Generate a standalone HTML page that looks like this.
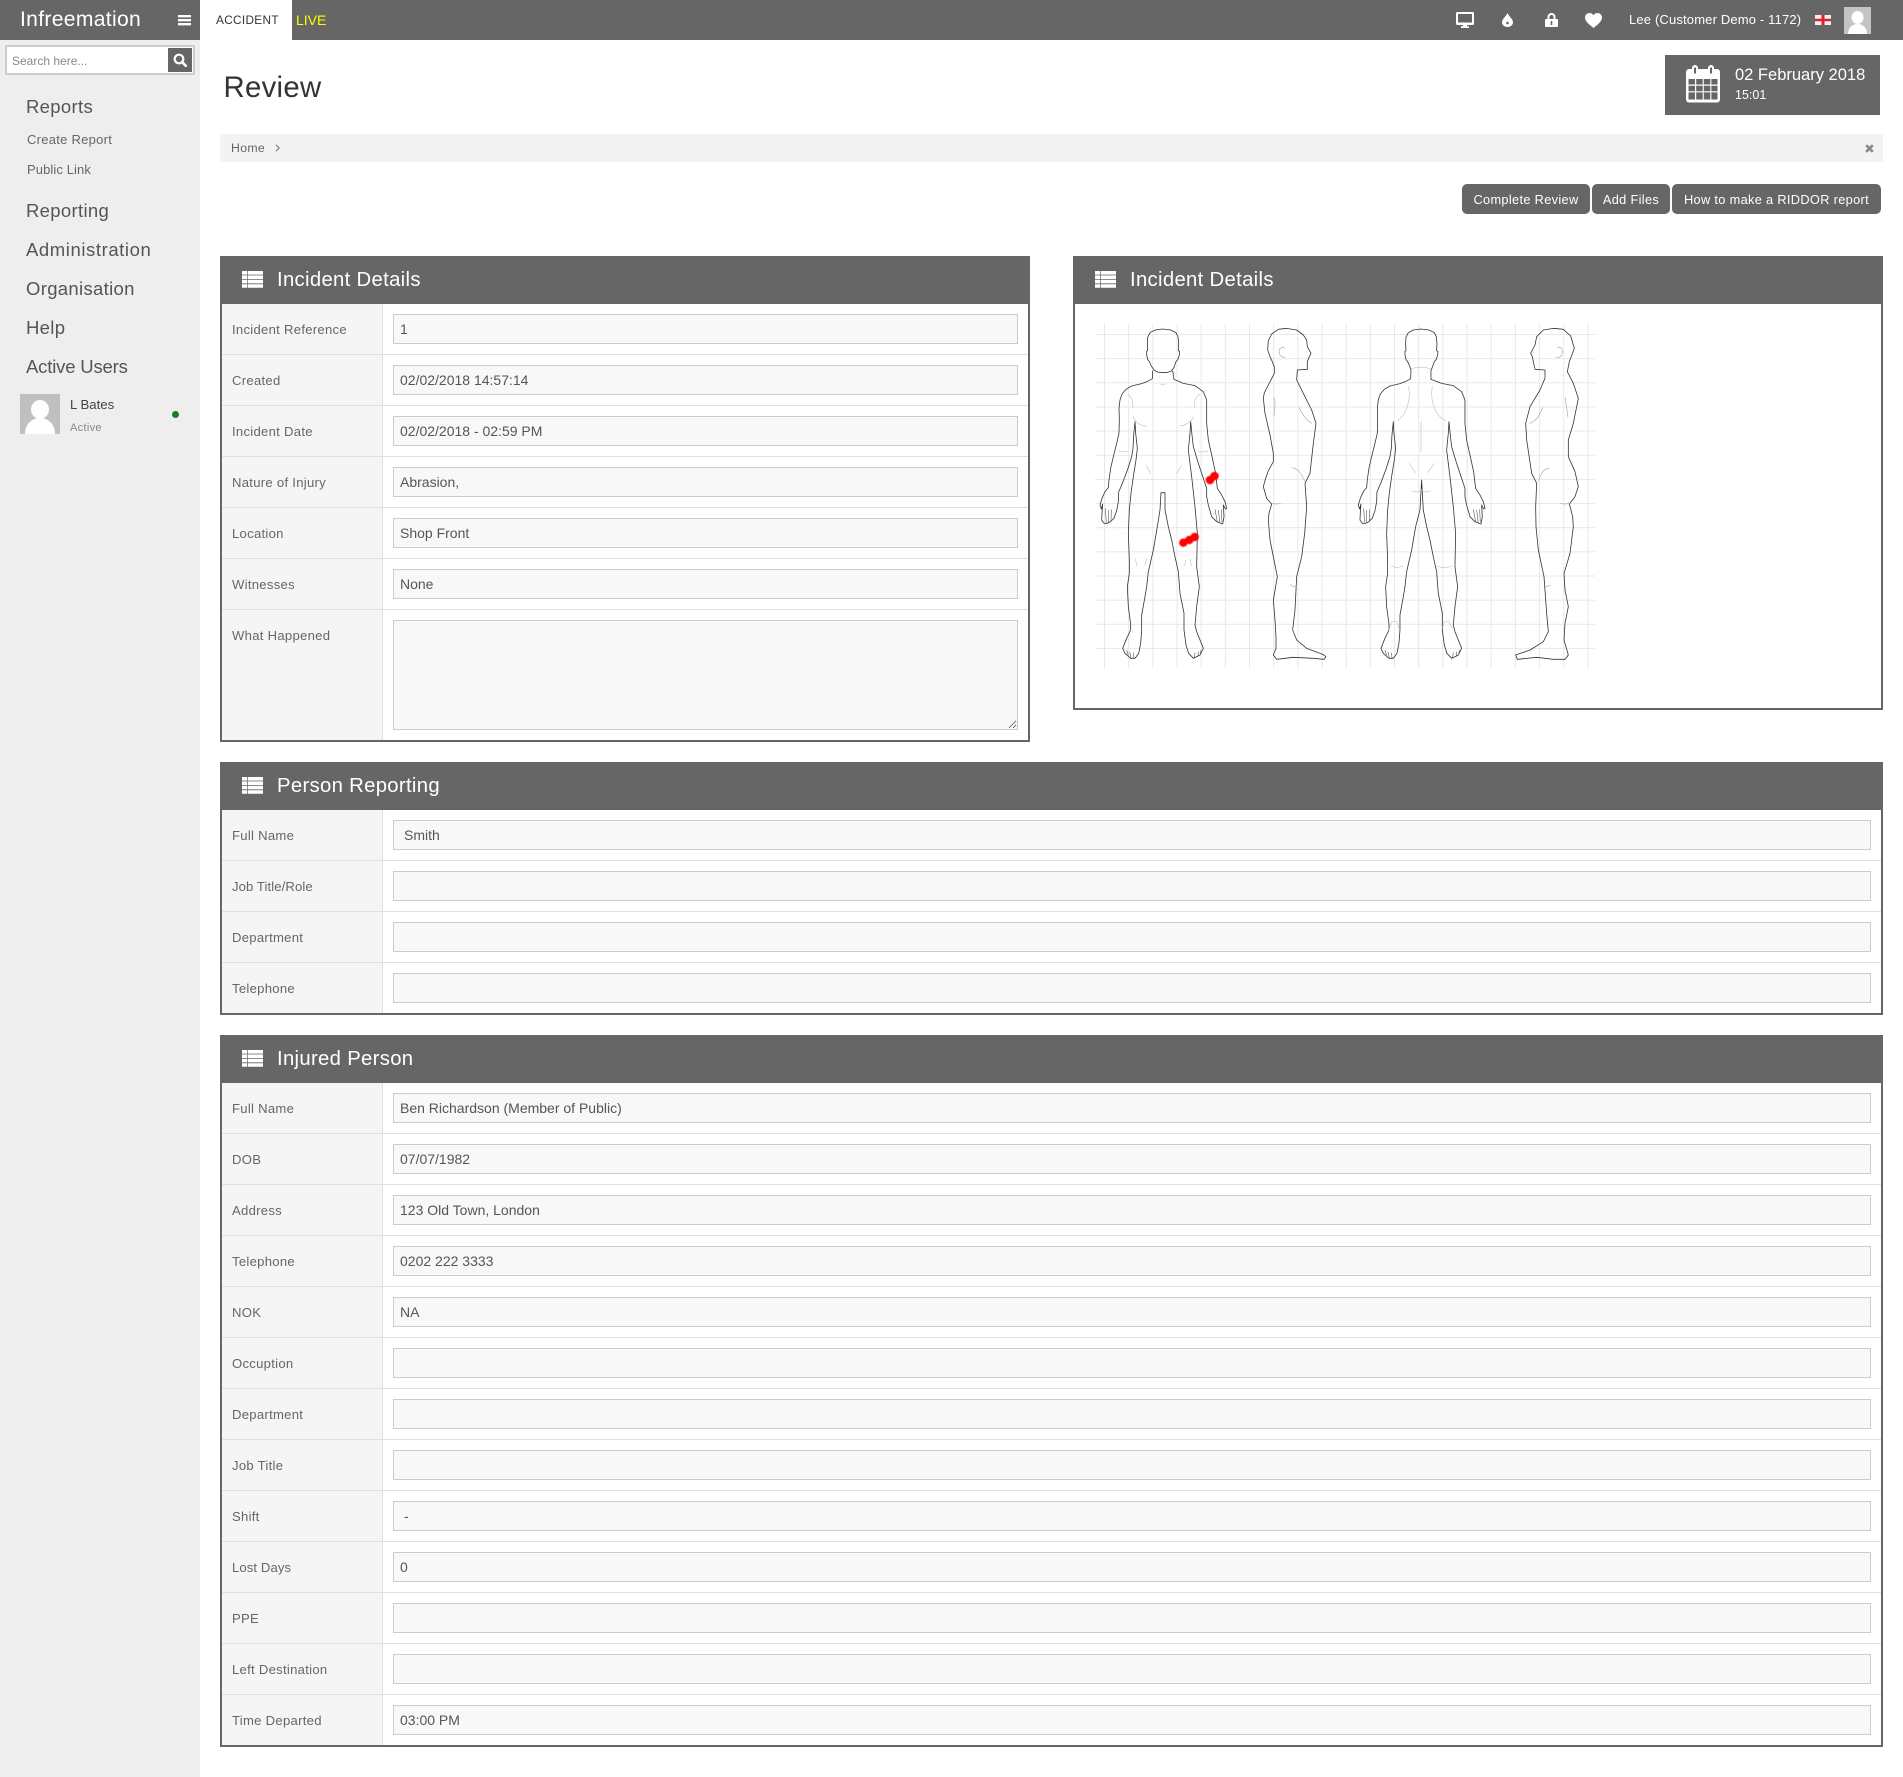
<!DOCTYPE html>
<html lang="en">
<head>
<meta charset="utf-8">
<title>Review</title>
<style>
*{box-sizing:border-box}
html,body{margin:0;padding:0}
body{width:1903px;height:1777px;position:relative;overflow:hidden;background:#fff;font-family:"Liberation Sans",Arial,sans-serif;letter-spacing:.02em;color:#555}
.abs{position:absolute;white-space:nowrap}
#top{position:absolute;left:0;top:0;width:1903px;height:40px;background:#666}
#side{position:absolute;left:0;top:40px;width:200px;height:1737px;background:#eee}
#tab{position:absolute;left:200px;top:0;width:92px;height:40px;background:#fff}
.nav{position:absolute;left:26px;font-size:18.5px;line-height:24px;color:#555;white-space:nowrap}
.sub{position:absolute;left:27px;font-size:13px;line-height:18px;color:#666;white-space:nowrap;letter-spacing:.27px}
.btn{position:absolute;top:184px;height:30px;background:#666;color:#fff;border-radius:5px;font-size:12.8px;line-height:31px;text-align:center;white-space:nowrap}
.panel{position:absolute;border:2px solid #666;background:#fff}
.head{margin:-2px -2px 0;height:48px;background:#666;color:#fff;position:relative;font-size:20.3px;line-height:48px}
.head span{position:absolute;left:57px;top:0;white-space:nowrap}
.head svg{position:absolute;left:22px;top:15px}
.row{height:51px;border-bottom:1px solid #e0e0e0;position:relative;background:#fff}
.row:last-child{border-bottom:0;height:50px}
.row .l{position:absolute;left:0;top:0;bottom:0;width:161px;background:#f5f5f5;border-right:1px solid #e0e0e0;padding-left:10px;font-size:13.1px;line-height:52px;color:#666;white-space:nowrap;letter-spacing:.28px}
.row .i{position:absolute;left:171px;right:10px;top:10px;height:30px;background:#f8f8f8;border:1px solid #ccc;font-size:14px;letter-spacing:0;line-height:28px;padding-left:6px;color:#555;white-space:nowrap}
.row .i.sp{padding-left:10px}
.row.ta{height:130px}
.row.ta textarea{position:absolute;left:171px;top:10px;width:625px;height:110px;background:#f8f8f8;border:1px solid #ccc;outline:0;margin:0;padding:0;display:block;border-radius:0}
</style>
</head>
<body>
<div id="top"></div>
<div id="side"></div>
<div id="tab"></div>

<div class="abs" style="left:20px;top:7px;font-size:21.1px;line-height:26px;color:#fff">Infreemation</div>
<svg class="abs" style="left:178px;top:15px" width="14" height="11"><path d="M0 0h13v2.400H0zM0 4h13v2.400H0zM0 8h13v2.400H0z" fill="#fff"/></svg>
<div class="abs" style="left:216px;top:12px;font-size:11.8px;line-height:17px;color:#333">ACCIDENT</div>
<div class="abs" style="left:296px;top:11px;font-size:14px;line-height:18px;color:#ff0;letter-spacing:0">LIVE</div>

<svg class="abs" style="left:1456px;top:12px" width="18" height="16"><path d="M1.500 0h15A1.500 1.500 0 0 1 18 1.500v10a1.500 1.500 0 0 1-1.500 1.500H11v1.300h2V16H5v-1.700h2V13H1.500A1.500 1.500 0 0 1 0 11.500v-10A1.500 1.500 0 0 1 1.500 0zM2 2v8.500h14V2z" fill="#fff" fill-rule="evenodd"/></svg>
<svg class="abs" style="left:1502px;top:13px" width="11" height="14"><path d="M5.500 0C7 3.500 11 6 11 9.300 11 12 8.600 14 5.500 14S0 12 0 9.300C0 6 4 3.500 5.500 0z" fill="#fff"/><circle cx="5.500" cy="10" r="1.300" fill="#666"/></svg>
<svg class="abs" style="left:1544.500px;top:13px" width="13" height="14"><path d="M2.500 6V4a4 4 0 0 1 8 0v2H12a1 1 0 0 1 1 1v6a1 1 0 0 1-1 1H1a1 1 0 0 1-1-1V7a1 1 0 0 1 1-1zM4.500 6h4V4a2 2 0 0 0-4 0z" fill="#fff" fill-rule="evenodd"/><rect x="5.700" y="8" width="1.600" height="4" fill="#666"/></svg>
<svg class="abs" style="left:1585px;top:13px" width="17" height="15"><path d="M8.500 15C3 10.500 0 8 0 4.500 0 2 2 0 4.500 0 6.200 0 7.700.9 8.500 2.300 9.300.9 10.800 0 12.500 0 15 0 17 2 17 4.500 17 8 14 10.500 8.500 15z" fill="#fff"/></svg>
<div class="abs" style="left:1629px;top:11px;font-size:13px;line-height:17px;color:#fff;letter-spacing:.16px">Lee (Customer Demo - 1172)</div>
<svg class="abs" style="left:1815px;top:15px" width="16" height="10"><rect width="16" height="10" fill="#f2f2f2"/><path d="M6.500 0h3v10h-3zM0 3.800h16v2.400H0z" fill="#d8232f"/></svg>
<svg class="abs" style="left:1844px;top:7px" width="27" height="27"><rect width="27" height="27" fill="#c4c4c4"/><ellipse cx="13.500" cy="10.500" rx="6" ry="6.500" fill="#fff"/><path d="M4 27c0-6 4-10 9.500-10S23 21 23 27z" fill="#fff"/></svg>

<!-- sidebar -->
<div class="abs" style="left:5px;top:45px;width:190px;height:30px;background:#fff;border:2px solid #ccc"></div>
<div class="abs" style="left:12px;top:53px;font-size:12px;line-height:16px;color:#888;letter-spacing:0">Search here...</div>
<div class="abs" style="left:168px;top:48px;width:24px;height:24px;background:#666"></div>
<svg class="abs" style="left:173px;top:53px" width="14" height="14"><circle cx="6" cy="6" r="4.300" fill="none" stroke="#fff" stroke-width="2.200"/><path d="M9.200 9.200l3.600 3.600" stroke="#fff" stroke-width="2.600" stroke-linecap="round"/></svg>

<div class="nav" style="top:95px">Reports</div>
<div class="sub" style="top:131px">Create Report</div>
<div class="sub" style="top:161px;letter-spacing:.1px">Public Link</div>
<div class="nav" style="top:199px">Reporting</div>
<div class="nav" style="top:238px;letter-spacing:.58px">Administration</div>
<div class="nav" style="top:277px">Organisation</div>
<div class="nav" style="top:316px">Help</div>
<div class="nav" style="top:355px;letter-spacing:-.18px">Active Users</div>
<svg class="abs" style="left:20px;top:394px" width="40" height="40"><rect width="40" height="40" fill="#c0c0c0"/><ellipse cx="20" cy="15.500" rx="9" ry="9.500" fill="#fff"/><path d="M5 40c0-9 6-16 15-16s15 7 15 16z" fill="#fff"/></svg>
<div class="abs" style="left:70px;top:396px;font-size:13.200px;line-height:17px;color:#444;letter-spacing:0">L Bates</div>
<div class="abs" style="left:70px;top:421px;font-size:11px;line-height:14px;color:#888">Active</div>
<div class="abs" style="left:171.500px;top:410.500px;width:7px;height:7px;border-radius:50%;background:#1a7a2a"></div>

<!-- heading -->
<div class="abs" style="left:223.500px;top:68px;font-size:29.300px;line-height:40px;color:#333">Review</div>
<div class="abs" style="left:1665px;top:55px;width:215px;height:60px;background:#666"></div>
<svg class="abs" style="left:1685px;top:65px" width="36" height="38">
<rect x="1" y="4" width="34" height="33.500" rx="3" fill="#fff"/>
<path d="M3.500 14h6.500v5.500H3.500zM11.200 14h6.500v5.500h-6.500zM18.800 14h6.500v5.500h-6.500zM26.400 14h6.100v5.500h-6.100zM3.500 20.700h6.500v5.500H3.500zM11.200 20.700h6.500v5.500h-6.500zM18.800 20.700h6.500v5.500h-6.500zM26.400 20.700h6.100v5.500h-6.100zM3.500 27.400h6.500v7.100H3.500zM11.200 27.400h6.500v7.100h-6.500zM18.800 27.400h6.500v7.100h-6.500zM26.400 27.400h6.100v7.100h-6.100z" fill="#666"/>
<rect x="7" y="0" width="6" height="11" rx="3" fill="#fff"/><rect x="23" y="0" width="6" height="11" rx="3" fill="#fff"/>
<rect x="9" y="2.500" width="2" height="6" fill="#666"/><rect x="25" y="2.500" width="2" height="6" fill="#666"/>
</svg>
<div class="abs" style="left:1735px;top:63px;font-size:16.500px;line-height:24px;color:#fff;letter-spacing:0">02 February 2018</div>
<div class="abs" style="left:1735px;top:87px;font-size:12.500px;line-height:16px;color:#fff;letter-spacing:0">15:01</div>

<!-- breadcrumb -->
<div class="abs" style="left:220px;top:134px;width:1663px;height:28px;background:#f3f3f3"></div>
<div class="abs" style="left:231px;top:140px;font-size:12.300px;line-height:16px;color:#666">Home</div>
<svg class="abs" style="left:275px;top:144px" width="6" height="8"><path d="M1 .8L4.200 4 1 7.200" fill="none" stroke="#777" stroke-width="1.100"/></svg>
<svg class="abs" style="left:1865px;top:144px" width="9" height="9"><path d="M1.200 1.200l6.600 6.600M7.800 1.200L1.200 7.800" stroke="#8a8a8a" stroke-width="2.600"/></svg>

<!-- buttons -->
<div class="btn" style="left:1462px;width:128px">Complete Review</div>
<div class="btn" style="left:1592px;width:78px">Add Files</div>
<div class="btn" style="left:1672px;width:209px">How to make a RIDDOR report</div>

<!-- panel 1 -->
<div class="panel" style="left:220px;top:256px;width:810px;height:486px">
<div class="head"><svg width="21" height="17"><path d="M0 0h5v3.600H0zM5.700 0H21v3.600H5.700zM0 4.400h5V8H0zM5.700 4.400H21V8H5.700zM0 8.800h5v3.600H0zM5.700 8.800H21v3.600H5.700zM0 13.200h5v3.600H0zM5.700 13.200H21v3.600H5.700z" fill="#fff"/></svg><span>Incident Details</span></div>
<div class="row"><div class="l">Incident Reference</div><div class="i">1</div></div>
<div class="row"><div class="l">Created</div><div class="i">02/02/2018 14:57:14</div></div>
<div class="row"><div class="l">Incident Date</div><div class="i">02/02/2018 - 02:59 PM</div></div>
<div class="row"><div class="l">Nature of Injury</div><div class="i">Abrasion,</div></div>
<div class="row"><div class="l">Location</div><div class="i">Shop Front</div></div>
<div class="row"><div class="l">Witnesses</div><div class="i">None</div></div>
<div class="row ta"><div class="l">What Happened</div><textarea readonly></textarea></div>
</div>

<!-- panel 2 -->
<div class="panel" style="left:1073px;top:256px;width:810px;height:454px">
<div class="head"><svg width="21" height="17"><path d="M0 0h5v3.600H0zM5.700 0H21v3.600H5.700zM0 4.400h5V8H0zM5.700 4.400H21V8H5.700zM0 8.800h5v3.600H0zM5.700 8.800H21v3.600H5.700zM0 13.200h5v3.600H0zM5.700 13.200H21v3.600H5.700z" fill="#fff"/></svg><span>Incident Details</span></div>
</div>

<svg class="abs" style="left:1095px;top:324px" width="500" height="344" viewBox="1095 324 500 344">
<defs>
<pattern id="g" patternUnits="userSpaceOnUse" x="1104" y="334" width="24.170" height="24.150">
<path d="M.5 0V24.150M0 .5H24.170" stroke="#e8e8e8" stroke-width="1" fill="none"/>
</pattern>
<filter id="b" x="-30%" y="-30%" width="160%" height="160%"><feGaussianBlur stdDeviation=".45"/></filter>
<filter id="s" x="-5%" y="-5%" width="110%" height="110%"><feGaussianBlur stdDeviation=".28"/></filter>
<g id="front" fill="none">
<path stroke="#333" stroke-width="2.400" stroke-linejoin="round" d="M143 92L142 70 143 52 150 38 165 30 188 27 212 30 228 38 234 50 236 70 235 92 239 94 238 105 234 118 228 125 222 142 214 153 203 157 188 158 172 156 162 150 154 138 148 125 143 118 140 105 140 94Z"/>
<path stroke="#333" stroke-width="2.400" stroke-linejoin="round" d="M158 152L157 176 143 184 125 191 95 198 78 208 66 222 60 240 57 265 58 295 57 340 50 370 40 410 32 445 27 480 25 503 15 515 6 535 0 555 4 567 8 552 6 580 5 600 12 610 21 610 30 606 42 595 50 572 55 545 56 516 68 488 84 445 95 410 99 385 101 345 105 305 107 340 112 385 108 420 100 470 93 520 88 570 85 640 88 720 88 760 82 800 85 860 92 912 92 930 80 955 68 985 75 1000 92 1015 105 1015 116 1000 122 970 125 930 125 885 135 830 140 800 145 755 160 690 172 620 180 570 183 518 195 518 195 570 205 620 215 660 225 710 235 755 240 820 252 880 252 930 258 975 266 1000 280 1015 300 1005 310 985 300 960 290 935 285 915 290 860 298 800 290 740 292 640 285 560 275 470 265 390 270 340 272 305 276 345 280 380 295 430 320 505 320 530 325 555 335 590 350 605 368 612 372 590 370 555 376 567 380 565 375 545 365 525 352 505 346 455 335 405 325 360 320 310 320 240 310 215 285 197 250 190 222 178 218 152"/>
<path stroke="#444" stroke-width="1.600" d="M16 565L19 607M25 570L25 608M34 568L33 602M345 568L352 606M355 570L360 610M364 568L366 606M80 990L85 1006M89 996L93 1013M100 998L101 1014M285 998L283 1013M295 995L294 1010M303 990L301 1004"/>
<path stroke="#c4c4c4" stroke-width="2" d="M100 290C105 310 125 318 140 318M280 290C275 305 255 318 238 318M85 222C98 235 100 250 98 265M300 222C285 232 280 248 285 265M55 392C62 396 75 396 85 394M295 394C305 397 318 396 325 392M138 435L152 462M245 435L230 462M182 192C186 196 192 196 196 190M105 715L112 738M140 715L135 735M258 720L252 738M270 715L274 738"/>
</g>
<g id="side1" fill="none">
<path stroke="#333" stroke-width="2.400" stroke-linejoin="round" d="M560 25L535 28 515 42 505 62 503 90 510 110 517 125 523 140 523 160 505 195 493 218 490 235 495 280 510 345 520 400 520 425 505 452 497 475 490 500 500 535 515 552 507 580 505 600 510 660 522 720 532 770 520 840 525 900 528 950 528 985 520 1005 530 1018 580 1012 640 1015 672 1018 678 1010 668 1003 620 985 590 960 578 930 585 870 590 770 605 710 614 640 620 560 615 490 630 460 640 370 648 310 635 270 610 220 590 180 592 150 622 148 622 125 628 110 633 100 622 80 620 60 610 45 590 30Z"/>
<path stroke="#aaa" stroke-width="2" d="M555 85C545 78 535 85 538 100 540 110 550 112 555 112M520 232C530 240 522 265 522 290M597 262C607 285 622 302 635 310M575 443C600 445 605 470 615 483M570 793C575 800 585 802 590 798M515 550C525 553 535 552 542 550"/>
</g>
</defs>
<rect x="1095" y="324" width="500" height="344" fill="url(#g)"/>
<g filter="url(#s)">
<g transform="translate(1100 320) scale(.33333)">
<use href="#front"/>
<use href="#side1"/>
</g>
<g transform="translate(1358.300 320) scale(.33333)" fill="none">
<path stroke="#333" stroke-width="2.400" stroke-linejoin="round" d="M143 92L142 70 143 52 150 38 165 30 188 27 212 30 228 38 234 50 236 70 235 92 239 94 238 105 234 118 228 125 222 142 218 152 218 178 250 190 285 197 310 215 320 240 320 310 325 360 335 405 346 455 352 505 365 525 375 545 380 565 376 567 370 555 372 590 368 612 350 605 335 590 325 555 320 530 320 505 295 430 280 380 276 345 272 305 270 340 265 390 275 470 285 560 292 640 290 740 298 800 290 860 285 915 290 935 300 960 310 985 300 1005 280 1015 266 1000 258 975 252 930 252 880 240 820 235 755 225 710 215 660 205 620 195 570 190 480 185 570 172 620 160 690 145 755 140 800 135 830 125 885 125 930 122 970 116 1000 105 1015 92 1015 75 1000 68 985 80 955 92 930 92 912 85 860 82 800 88 760 88 720 85 640 88 570 93 520 100 470 108 420 112 385 107 340 105 305 101 345 99 385 95 410 84 445 68 488 56 516 55 545 50 572 42 595 30 606 21 610 12 610 5 600 6 580 8 552 4 567 0 555 6 535 15 515 25 503 27 480 32 445 40 410 50 370 57 340 58 295 57 265 60 240 66 222 78 208 95 198 125 191 143 184 157 176 158 152 154 138 148 125 143 118 140 105 140 94Z"/>
<path stroke="#444" stroke-width="1.600" d="M16 565L19 607M25 570L25 608M34 568L33 602M345 568L352 606M355 570L360 610M364 568L366 606M80 990L85 1006M89 996L93 1013M100 998L101 1014M285 998L283 1013M295 995L294 1010M303 990L301 1004"/>
<path stroke="#c4c4c4" stroke-width="2" d="M158 148C170 140 205 140 218 148M150 198C158 225 150 280 118 302M222 198C215 240 228 285 262 302M188 305V395M152 430L172 458M228 430L208 458M160 512C172 518 182 516 188 510 194 516 206 518 218 512M98 738C110 744 125 742 135 738M235 738C250 744 268 744 282 738M92 930L100 905 115 905 122 925M252 925L258 905 272 905 283 925"/>
</g>
<g transform="translate(1480 320) scale(.33333)" fill="none">
<path stroke="#333" stroke-width="2.400" stroke-linejoin="round" d="M220 25L250 28 272 48 283 85 268 125 262 155 280 190 295 235 280 310 265 360 265 410 285 455 295 500 285 530 268 552 278 590 280 620 270 700 252 760 255 810 265 860 255 910 252 960 265 1005 255 1018 220 1018 170 1012 112 1018 107 1005 150 990 190 965 205 935 200 880 192 770 175 690 168 620 167 560 170 490 155 460 140 360 137 310 150 260 180 210 195 175 195 150 165 148 160 125 157 110 152 100 165 75 170 50 190 30Z"/>
<path stroke="#aaa" stroke-width="2" d="M232 82C245 80 250 90 245 105 242 112 235 112 228 112M255 232C258 250 262 275 264 292M188 262C180 285 168 305 148 310M208 445C190 445 180 465 176 483M195 798C200 800 208 798 212 796M240 550C250 553 262 552 270 550"/>
</g>
</g>
<g filter="url(#b)" fill="#f00">
<circle cx="1210" cy="480" r="4.300"/><circle cx="1214.500" cy="476" r="4.300"/>
<circle cx="1183.300" cy="542.700" r="4.200"/><circle cx="1189.300" cy="540" r="4.200"/><circle cx="1194.700" cy="537" r="4.200"/>
</g>
</svg>

<!-- panel 3 -->
<div class="panel" style="left:220px;top:762px;width:1663px;height:253px">
<div class="head"><svg width="21" height="17"><path d="M0 0h5v3.600H0zM5.700 0H21v3.600H5.700zM0 4.400h5V8H0zM5.700 4.400H21V8H5.700zM0 8.800h5v3.600H0zM5.700 8.800H21v3.600H5.700zM0 13.200h5v3.600H0zM5.700 13.200H21v3.600H5.700z" fill="#fff"/></svg><span>Person Reporting</span></div>
<div class="row"><div class="l">Full Name</div><div class="i sp">Smith</div></div>
<div class="row"><div class="l" style="letter-spacing:.1px">Job Title/Role</div><div class="i"></div></div>
<div class="row"><div class="l">Department</div><div class="i"></div></div>
<div class="row"><div class="l">Telephone</div><div class="i"></div></div>
</div>

<!-- panel 4 -->
<div class="panel" style="left:220px;top:1035px;width:1663px;height:712px">
<div class="head"><svg width="21" height="17"><path d="M0 0h5v3.600H0zM5.700 0H21v3.600H5.700zM0 4.400h5V8H0zM5.700 4.400H21V8H5.700zM0 8.800h5v3.600H0zM5.700 8.800H21v3.600H5.700zM0 13.200h5v3.600H0zM5.700 13.200H21v3.600H5.700z" fill="#fff"/></svg><span>Injured Person</span></div>
<div class="row"><div class="l">Full Name</div><div class="i">Ben Richardson (Member of Public)</div></div>
<div class="row"><div class="l">DOB</div><div class="i">07/07/1982</div></div>
<div class="row"><div class="l">Address</div><div class="i">123 Old Town, London</div></div>
<div class="row"><div class="l">Telephone</div><div class="i">0202 222 3333</div></div>
<div class="row"><div class="l">NOK</div><div class="i">NA</div></div>
<div class="row"><div class="l">Occuption</div><div class="i"></div></div>
<div class="row"><div class="l">Department</div><div class="i"></div></div>
<div class="row"><div class="l">Job Title</div><div class="i"></div></div>
<div class="row"><div class="l">Shift</div><div class="i sp">-</div></div>
<div class="row"><div class="l" style="letter-spacing:.1px">Lost Days</div><div class="i">0</div></div>
<div class="row"><div class="l">PPE</div><div class="i"></div></div>
<div class="row"><div class="l">Left Destination</div><div class="i"></div></div>
<div class="row"><div class="l">Time Departed</div><div class="i">03:00 PM</div></div>
</div>
</body>
</html>
